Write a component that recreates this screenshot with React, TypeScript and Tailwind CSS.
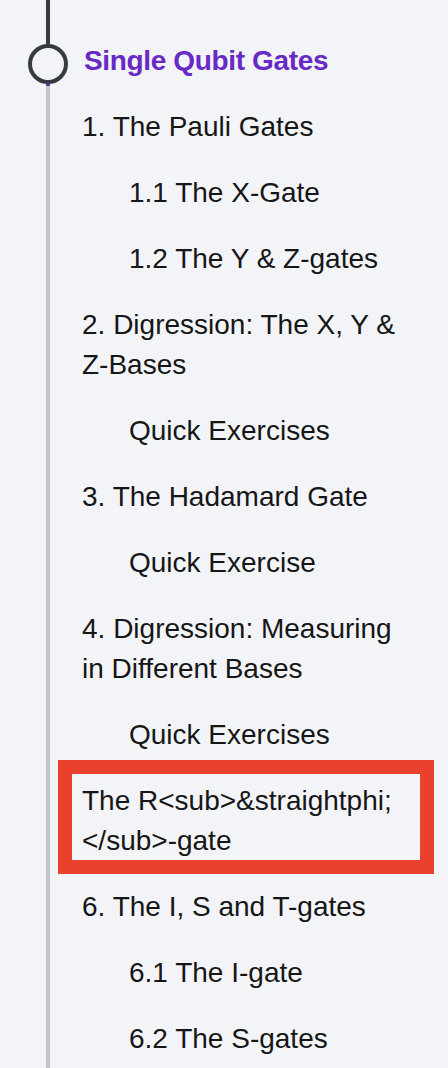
const items: { label: React.ReactNode; sub?: boolean; active?: boolean }[] = [
  { label: '1. The Pauli Gates' },
  { label: '1.1 The X-Gate', sub: true },
  { label: '1.2 The Y & Z-gates', sub: true },
  { label: '2. Digression: The X, Y & Z-Bases' },
  { label: 'Quick Exercises', sub: true },
  { label: '3. The Hadamard Gate' },
  { label: 'Quick Exercise', sub: true },
  { label: '4. Digression: Measuring in Different Bases' },
  { label: 'Quick Exercises', sub: true },
  {
    label: (
      <>
        {'The R<sub>&straightphi;'}
        <wbr />
        {'</sub>-gate'}
      </>
    ),
    active: true,
  },
  { label: '6. The I, S and T-gates' },
  { label: '6.1 The I-gate', sub: true },
  { label: '6.2 The S-gates', sub: true },
];

export default function App() {
  return (
    <div className="flex min-h-screen bg-[#f2f4f8] font-['Liberation_Sans',Arial,sans-serif] text-[#161616]">
      {/* timeline rail */}
      <div className="ml-[28px] flex w-10 shrink-0 flex-col items-center">
        <div className="h-[44px] w-1 bg-[#343a3f]" />
        <div className="h-10 w-10 rounded-full border-4 border-[#343a3f]" />
        <div className="flex w-1 flex-1 flex-col bg-[#c1c7cd]">
          <div className="h-[2px] bg-[#6929c4]" />
        </div>
      </div>

      <nav className="ml-[14px] flex-1 pr-[36px]">
        <h2 className="ml-[2px] mt-[41px] text-[28px] font-semibold leading-[40px] tracking-[-0.35px] text-[#6929c4]">
          Single Qubit Gates
        </h2>
        <ul className="mt-[13px]">
          {items.map((item, i) => (
            <li
              key={i}
              className={`relative py-[13px] text-[28px] leading-[40px] break-words ${item.sub ? 'pl-[47px]' : ''}`}
            >
              {item.label}
              {item.active ? (
                <span className="pointer-events-none absolute -left-[24px] -right-[22px] -top-[8px] bottom-0 border-[14px] border-[#e9412b]" />
              ) : null}
            </li>
          ))}
        </ul>
      </nav>
    </div>
  );
}
